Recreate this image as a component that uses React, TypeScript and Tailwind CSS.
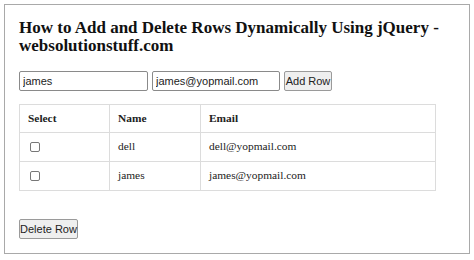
import React from "react";

export default function App() {
  const rows = [
    { name: "dell", email: "dell@yopmail.com" },
    { name: "james", email: "james@yopmail.com" },
  ];
  return (
    <div className="bg-white w-[474px] h-[260px] pt-[4px] pl-[4px]">
      <div className="w-[466px] h-[250px] border border-[#a9a9a9] pl-[14px] pt-[14px] flex flex-col">
        <h1
          className="text-[17px] leading-[18px] font-bold text-[#111]"
          style={{ fontFamily: '"Liberation Serif", serif' }}
        >
          How to Add and Delete Rows Dynamically Using jQuery -<br />
          websolutionstuff.com
        </h1>
        <div
          className="flex gap-[4px] mt-[16px] text-[11px] text-[#222]"
          style={{ fontFamily: '"Liberation Sans", sans-serif' }}
        >
          <input
            readOnly
            value="james"
            className="w-[129px] h-[20px] border border-[#8a8a8a] rounded-[2px] px-[3px] text-[11px] outline-none"
          />
          <input
            readOnly
            value="james@yopmail.com"
            className="w-[128px] h-[20px] border border-[#8a8a8a] rounded-[2px] px-[3px] text-[11px] outline-none"
          />
          <button className="w-[48px] h-[20px] border border-[#9a9a9a] rounded-[2px] bg-[#efefef] text-[11px] text-[#222]">
            Add Row
          </button>
        </div>
        <table
          className="mt-[13px] w-[417px] border-collapse text-[11.4px] text-[#222]"
          style={{ fontFamily: '"Liberation Serif", serif' }}
        >
          <thead>
            <tr className="h-[28px]">
              <th className="w-[90px] border border-[#dcdcdc] text-left font-bold pl-[8px]">Select</th>
              <th className="w-[91px] border border-[#dcdcdc] text-left font-bold pl-[8px]">Name</th>
              <th className="border border-[#dcdcdc] text-left font-bold pl-[8px]">Email</th>
            </tr>
          </thead>
          <tbody>
            {rows.map((r) => (
              <tr key={r.name} className="h-[29px]">
                <td className="border border-[#dcdcdc] pl-[10px]">
                  <span className="block w-[10px] h-[10px] border border-[#777] rounded-[2px] bg-white" />
                </td>
                <td className="border border-[#dcdcdc] pl-[8px]">{r.name}</td>
                <td className="border border-[#dcdcdc] pl-[8px]">{r.email}</td>
              </tr>
            ))}
          </tbody>
        </table>
        <div className="mt-[28px] flex" style={{ fontFamily: '"Liberation Sans", sans-serif' }}>
          <button className="w-[59px] h-[20px] border border-[#9a9a9a] rounded-[2px] bg-[#efefef] text-[11px] text-[#222]">
            Delete Row
          </button>
        </div>
      </div>
    </div>
  );
}
